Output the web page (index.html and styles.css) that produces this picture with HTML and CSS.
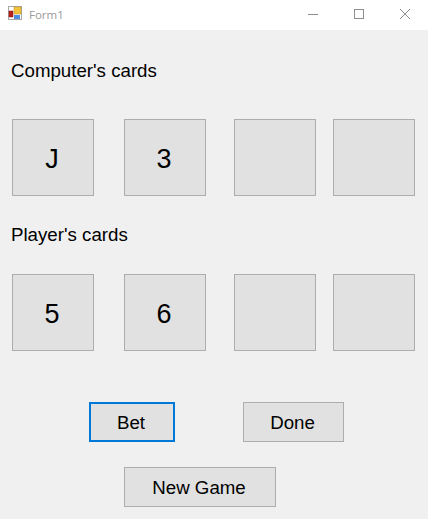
FILE: index.html
```html
<!DOCTYPE html>
<html lang="en">
<head>
  <meta charset="UTF-8">
  <meta name="viewport" content="width=device-width, initial-scale=1.0">
  <title>Form1</title>
  <link rel="stylesheet" href="styles.css">
</head>
<body>
  <header class="titlebar">
    <svg class="app-icon" width="16" height="16" viewBox="0 0 16 16">
      <rect x="0.5" y="0.5" width="13" height="13" fill="#fff" stroke="#a8a8a8"/>
      <rect x="1" y="5" width="4" height="6" fill="#b8201c" stroke="#8c1512" stroke-width="0.5"/>
      <rect x="6" y="1" width="7" height="7" fill="#f5c33b" stroke="#b98a1c" stroke-width="0.5"/>
      <rect x="6" y="9" width="6" height="4" fill="#4f8fe0"/>
    </svg>
    <span class="title">Form1</span>
    <div class="window-controls">
      <svg width="12" height="12" viewBox="0 0 12 12"><path d="M1 6.5H11" stroke="#8f8f8f" fill="none"/></svg>
      <svg width="12" height="12" viewBox="0 0 12 12"><rect x="1.5" y="1.5" width="9" height="9" stroke="#8f8f8f" fill="none"/></svg>
      <svg width="12" height="12" viewBox="0 0 12 12"><path d="M1 1L11 11M11 1L1 11" stroke="#8f8f8f" fill="none"/></svg>
    </div>
  </header>

  <main class="form">
    <h2 class="label computer-label">Computer's cards</h2>
    <div class="cards">
      <button class="card">J</button>
      <button class="card">3</button>
      <button class="card"></button>
      <button class="card"></button>
    </div>

    <h2 class="label player-label">Player's cards</h2>
    <div class="cards">
      <button class="card">5</button>
      <button class="card">6</button>
      <button class="card"></button>
      <button class="card"></button>
    </div>

    <div class="actions">
      <button class="btn btn-bet">Bet</button>
      <button class="btn btn-done">Done</button>
    </div>
    <button class="btn btn-new">New Game</button>
  </main>
</body>
</html>
```

FILE: styles.css
```css
* {
  margin: 0;
  padding: 0;
  box-sizing: border-box;
}

body {
  width: 428px;
  height: 519px;
  overflow: hidden;
  background: #f0f0f0;
  color: #000;
  font-family: "Liberation Sans", Arial, sans-serif;
}

/* Title bar */
.titlebar {
  display: flex;
  align-items: center;
  height: 30px;
  padding-left: 8px;
  background: #fff;
}

.app-icon {
  margin-bottom: 2px;
}

.title {
  margin-left: 5px;
  margin-bottom: 2px;
  font-family: "Open Sans", sans-serif;
  font-size: 11.5px;
  color: #999;
}

.window-controls {
  display: flex;
  gap: 34px;
  margin-left: auto;
  margin-right: 17px;
  margin-bottom: 2px;
}

/* Form */
.form {
  padding-left: 12px;
}

.label {
  font-size: 18.7px;
  font-weight: normal;
  line-height: 22px;
  margin-left: -1px;
}

.computer-label {
  margin-top: 30px;
  margin-bottom: 37px;
}

.player-label {
  margin-top: 28px;
  margin-bottom: 28px;
}

.cards {
  display: flex;
}

.card {
  flex: none;
  width: 82px;
  height: 77px;
  padding-top: 3px;
  padding-right: 2px;
  background: #e1e1e1;
  border: 1px solid #adadad;
  font-family: inherit;
  font-size: 27px;
  color: #000;
  margin-right: 30px;
}

.card:nth-child(2) {
  margin-right: 28px;
}

.card:nth-child(3) {
  margin-right: 17px;
}

.btn {
  display: block;
  height: 40px;
  padding-top: 2px;
  padding-right: 2px;
  background: #e1e1e1;
  border: 1px solid #adadad;
  font-family: inherit;
  font-size: 18.7px;
  color: #000;
}

.actions {
  display: flex;
  gap: 68px;
  margin-top: 51px;
  margin-left: 77px;
}

.btn-bet {
  width: 86px;
  border: 2px solid #0078d7;
}

.btn-done {
  width: 101px;
}

.btn-new {
  width: 152px;
  margin-top: 25px;
  margin-left: 112px;
}
```
